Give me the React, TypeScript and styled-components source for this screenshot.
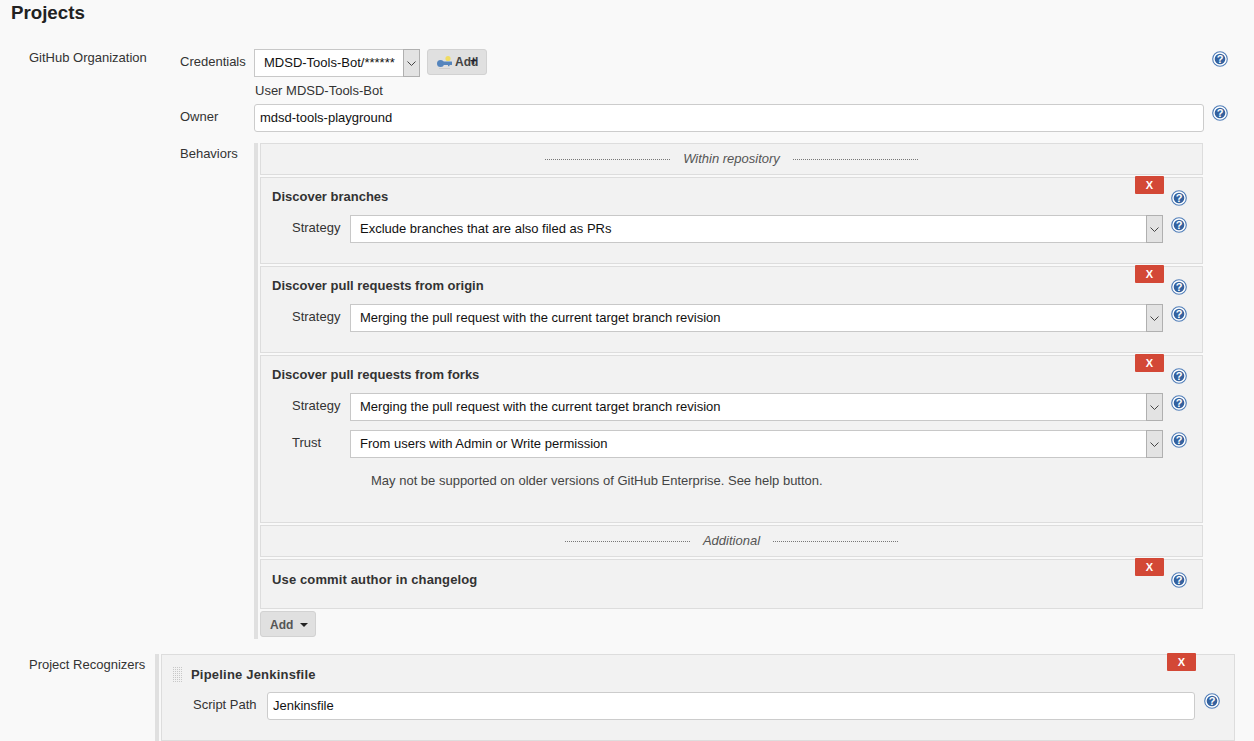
import React, {FC} from 'react';
import styled, {createGlobalStyle} from 'styled-components';

const GlobalStyle = createGlobalStyle`
  html, body {
    margin: 0;
    padding: 0;
    background: #f9f9f9;
    color: #333;
    font-family: "Liberation Sans", Arial, sans-serif;
    font-size: 13px;
    overflow: hidden;
  }
`;

const Page = styled.div`
  width: 1254px;
  height: 741px;
  overflow: hidden;
`;

const Title = styled.h1`
  margin: 0;
  padding-left: 11px;
  height: 49px;
  font-size: 18.72px;
  line-height: 26px;
  font-weight: bold;
  color: #222;
`;

const Section = styled.section<{$mt?: number}>`
  display: flex;
  align-items: flex-start;
  margin-top: ${p => p.$mt ?? 0}px;
`;

const SectionLabel = styled.div<{$width: number; $top: number}>`
  width: ${p => p.$width}px;
  padding-left: 29px;
  padding-top: ${p => p.$top}px;
  line-height: 16px;
  flex: none;
  box-sizing: border-box;
`;

const Fields = styled.div`
  width: 1048px;
  flex: none;
`;

const FieldRow = styled.div<{$mb?: number}>`
  display: flex;
  align-items: flex-start;
  margin-bottom: ${p => p.$mb ?? 0}px;
`;

const FieldLabel = styled.div<{$top: number}>`
  width: 74px;
  flex: none;
  padding-top: ${p => p.$top}px;
  line-height: 16px;
`;

const Select = styled.div<{$width?: number}>`
  display: flex;
  align-items: stretch;
  box-sizing: border-box;
  height: 28px;
  ${p => (p.$width ? `width: ${p.$width}px; flex: none;` : 'flex: 1; min-width: 0;')}
  background: #fff;
  border: 1px solid #c8c8c8;
`;

const SelectText = styled.div`
  flex: 1;
  padding-left: 9px;
  line-height: 26px;
  color: #111;
  white-space: nowrap;
  overflow: hidden;
`;

const SelectArrow = styled.div`
  width: 17px;
  flex: none;
  box-sizing: border-box;
  margin: -1px -1px -1px 0;
  display: flex;
  align-items: center;
  justify-content: center;
  background: #e3e3e3;
  border: 1px solid #b0b0b0;
`;

const TextInput = styled.div`
  flex: 1;
  min-width: 0;
  box-sizing: border-box;
  height: 28px;
  padding-left: 5px;
  line-height: 26px;
  color: #111;
  background: #fff;
  border: 1px solid #ccc;
  border-radius: 3px;
`;

const HelpSlot = styled.div<{$left: number; $top: number}>`
  flex: none;
  margin-left: ${p => p.$left}px;
  margin-top: ${p => p.$top}px;
  width: 16px;
  height: 16px;
`;

const KeyButton = styled.div`
  flex: none;
  display: flex;
  align-items: center;
  box-sizing: border-box;
  width: 60px;
  height: 26px;
  margin-left: 7px;
  padding-left: 8px;
  gap: 1px;
  font-weight: bold;
  font-size: 12px;
  color: #444;
  background: #e0e0e0;
  border: 1px solid #d2d2d2;
  border-radius: 3px;
  position: relative;
`;

const PlusMark = styled.span`
  position: absolute;
  left: 42px;
  top: 4px;
  font-size: 12px;
  color: #223;
`;

const SubText = styled.div`
  margin-left: 75px;
  height: 27px;
  line-height: 28px;
`;

const BarColumn = styled.div`
  flex: none;
  width: 949px;
  box-sizing: border-box;
  border-left: 4px solid #e0e0e0;
  padding: 0 0 2px 2px;
`;

const BehaviorList = styled.div`
  display: flex;
  flex-direction: column;
  gap: 2px;
`;

const Divider = styled.div`
  height: 30px;
  background: #f2f2f2;
  border: 1px solid #ddd;
  display: flex;
  align-items: center;
  justify-content: center;
  gap: 13px;
  font-style: italic;
  color: #555;
`;

const DividerText = styled.span`
  position: relative;
  top: -1px;
`;

const DividerLine = styled.span<{$width: number}>`
  width: ${p => p.$width}px;
  border-top: 1px dotted #777;
`;

const Item = styled.div<{$pb: number}>`
  position: relative;
  background: #f2f2f2;
  border: 1px solid #ddd;
  padding-bottom: ${p => p.$pb}px;
`;

const ItemHead = styled.div`
  display: flex;
  justify-content: space-between;
  align-items: flex-start;
  height: 37px;
  padding: 12px 15px 0 11px;
  box-sizing: border-box;
  font-weight: bold;
  line-height: 14px;
`;

const ItemTitle = styled.span<{$spacing?: number; $nudge?: number}>`
  letter-spacing: ${p => p.$spacing ?? 0}px;
  padding-top: ${p => p.$nudge ?? 0}px;
`;

const DeleteButton = styled.div<{$right: number}>`
  position: absolute;
  top: -2px;
  right: ${p => p.$right}px;
  width: 29px;
  height: 18px;
  background: #d34836;
  border-radius: 1px;
  color: #fff;
  font-size: 11px;
  font-weight: bold;
  line-height: 18px;
  text-align: center;
`;

const ItemRow = styled.div<{$mb?: number}>`
  display: flex;
  align-items: flex-start;
  padding: 0 15px 0 31px;
  margin-bottom: ${p => p.$mb ?? 0}px;
`;

const ItemLabel = styled.div`
  width: 58px;
  flex: none;
  padding-top: 5px;
  line-height: 16px;
`;

const Note = styled.div`
  margin: 15px 0 33px 110px;
  line-height: 16px;
  color: #444;
`;

const AddButton = styled.div`
  display: flex;
  align-items: center;
  box-sizing: border-box;
  width: 56px;
  height: 26px;
  margin-top: 2px;
  padding: 1px 0 0 9px;
  gap: 7px;
  font-weight: bold;
  font-size: 12px;
  color: #555;
  background: #e0e0e0;
  border: 1px solid #d2d2d2;
  border-radius: 3px;
`;

const Caret = styled.span`
  width: 0;
  height: 0;
  border-left: 4px solid transparent;
  border-right: 4px solid transparent;
  border-top: 4px solid #222;
`;

const RecognizerBar = styled.div`
  flex: none;
  width: 1080px;
  border-left: 4px solid #e0e0e0;
  padding-left: 2px;
  box-sizing: border-box;
`;

const RecognizerItem = styled.div`
  position: relative;
  height: 87px;
  box-sizing: border-box;
  background: #f2f2f2;
  border: 1px solid #ddd;
`;

const RecognizerHead = styled.div`
  display: flex;
  align-items: center;
  gap: 8px;
  height: 39px;
  padding-left: 11px;
  box-sizing: border-box;
  font-weight: bold;
  letter-spacing: 0.2px;
`;

const Grip = styled.span`
  width: 10px;
  height: 17px;
  background-image:
    repeating-linear-gradient(0deg, #f2f2f2 0 1px, transparent 1px 2px),
    repeating-linear-gradient(90deg, #c8c8c8 0 1px, transparent 1px 2px);
`;

const RecognizerRow = styled.div`
  display: flex;
  align-items: flex-start;
  margin-top: -2px;
  padding: 0 0 0 31px;
`;

const RecognizerLabel = styled.div`
  width: 74px;
  flex: none;
  padding-top: 5px;
  line-height: 16px;
`;

const RecognizerInputWrap = styled.div`
  width: 928px;
  flex: none;
  display: flex;
`;

const Help: FC = () => (
  <svg width="16" height="16" viewBox="0 0 16 16" style={{display: 'block'}}>
    <circle cx="8" cy="8" r="7.3" fill="#fff" stroke="#4f7db8" strokeWidth="1.1" />
    <circle cx="8" cy="8" r="5.3" fill="#34629f" />
    <text x="8" y="11.8" fontSize="11" fontWeight="bold" fontFamily="Liberation Sans" fill="#fff" textAnchor="middle">?</text>
  </svg>
);

const Chevron: FC = () => (
  <svg width="9" height="5" viewBox="0 0 9 5">
    <path d="M0.5 0.5 L4.5 4.5 L8.5 0.5" fill="none" stroke="#444" strokeWidth="1" />
  </svg>
);

const KeyIcon: FC = () => (
  <svg width="18" height="16" viewBox="0 0 18 16" style={{flex: 'none'}}>
    <circle cx="12" cy="4.5" r="2.6" fill="#f0dc62" />
    <circle cx="4.5" cy="9.5" r="3.5" fill="#5585bd" />
    <rect x="6" y="7.5" width="10" height="3.5" rx="0.5" fill="#5585bd" />
    <rect x="12" y="11" width="1.5" height="1.2" fill="#5585bd" />
    <rect x="3" y="14" width="11" height="1" fill="#cdcdcd" />
  </svg>
);

const Dropdown: FC<{value: string; width?: number}> = ({value, width}) => (
  <Select $width={width}>
    <SelectText>{value}</SelectText>
    <SelectArrow><Chevron /></SelectArrow>
  </Select>
);

const Behavior: FC<{title: string; pb: number; spacing?: number; nudge?: number; children?: React.ReactNode}> = ({title, pb, spacing, nudge, children}) => (
  <Item $pb={pb}>
    <DeleteButton $right={38}>X</DeleteButton>
    <ItemHead>
      <ItemTitle $spacing={spacing} $nudge={nudge}>{title}</ItemTitle>
      <Help />
    </ItemHead>
    {children}
  </Item>
);

const StrategyRow: FC<{label: string; value: string; mb?: number}> = ({label, value, mb}) => (
  <ItemRow $mb={mb}>
    <ItemLabel>{label}</ItemLabel>
    <Dropdown value={value} />
    <HelpSlot $left={8} $top={2}><Help /></HelpSlot>
  </ItemRow>
);

const MERGE = 'Merging the pull request with the current target branch revision';

const App: FC = () => (
  <Page>
    <GlobalStyle />
    <Title>Projects</Title>
    <Section>
      <SectionLabel $width={180} $top={1}>GitHub Organization</SectionLabel>
      <Fields>
        <FieldRow>
          <FieldLabel $top={5}>Credentials</FieldLabel>
          <Dropdown value="MDSD-Tools-Bot/******" width={166} />
          <KeyButton>
            <KeyIcon />
            Add
            <PlusMark>+</PlusMark>
          </KeyButton>
          <HelpSlot $left={725} $top={2}><Help /></HelpSlot>
        </FieldRow>
        <SubText>User MDSD-Tools-Bot</SubText>
        <FieldRow $mb={11}>
          <FieldLabel $top={5}>Owner</FieldLabel>
          <TextInput>mdsd-tools-playground</TextInput>
          <HelpSlot $left={8} $top={1}><Help /></HelpSlot>
        </FieldRow>
        <FieldRow>
          <FieldLabel $top={3}>Behaviors</FieldLabel>
          <BarColumn>
            <BehaviorList>
              <Divider>
                <DividerLine $width={125} /><DividerText>Within repository</DividerText><DividerLine $width={125} />
              </Divider>
              <Behavior title="Discover branches" pb={20}>
                <StrategyRow label="Strategy" value="Exclude branches that are also filed as PRs" />
              </Behavior>
              <Behavior title="Discover pull requests from origin" pb={20}>
                <StrategyRow label="Strategy" value={MERGE} />
              </Behavior>
              <Behavior title="Discover pull requests from forks" pb={0}>
                <StrategyRow label="Strategy" value={MERGE} mb={9} />
                <StrategyRow label="Trust" value="From users with Admin or Write permission" />
                <Note>May not be supported on older versions of GitHub Enterprise. See help button.</Note>
              </Behavior>
              <Divider>
                <DividerLine $width={125} /><DividerText>Additional</DividerText><DividerLine $width={125} />
              </Divider>
              <Behavior title="Use commit author in changelog" pb={11} spacing={0.13} nudge={1} />
            </BehaviorList>
            <AddButton>Add<Caret /></AddButton>
          </BarColumn>
        </FieldRow>
      </Fields>
    </Section>
    <Section $mt={15}>
      <SectionLabel $width={155} $top={3}>Project Recognizers</SectionLabel>
      <RecognizerBar>
        <RecognizerItem>
          <DeleteButton $right={38}>X</DeleteButton>
          <RecognizerHead><Grip />Pipeline Jenkinsfile</RecognizerHead>
          <RecognizerRow>
            <RecognizerLabel>Script Path</RecognizerLabel>
            <RecognizerInputWrap><TextInput>Jenkinsfile</TextInput></RecognizerInputWrap>
            <HelpSlot $left={9} $top={1}><Help /></HelpSlot>
          </RecognizerRow>
        </RecognizerItem>
      </RecognizerBar>
    </Section>
  </Page>
);

export default App;
